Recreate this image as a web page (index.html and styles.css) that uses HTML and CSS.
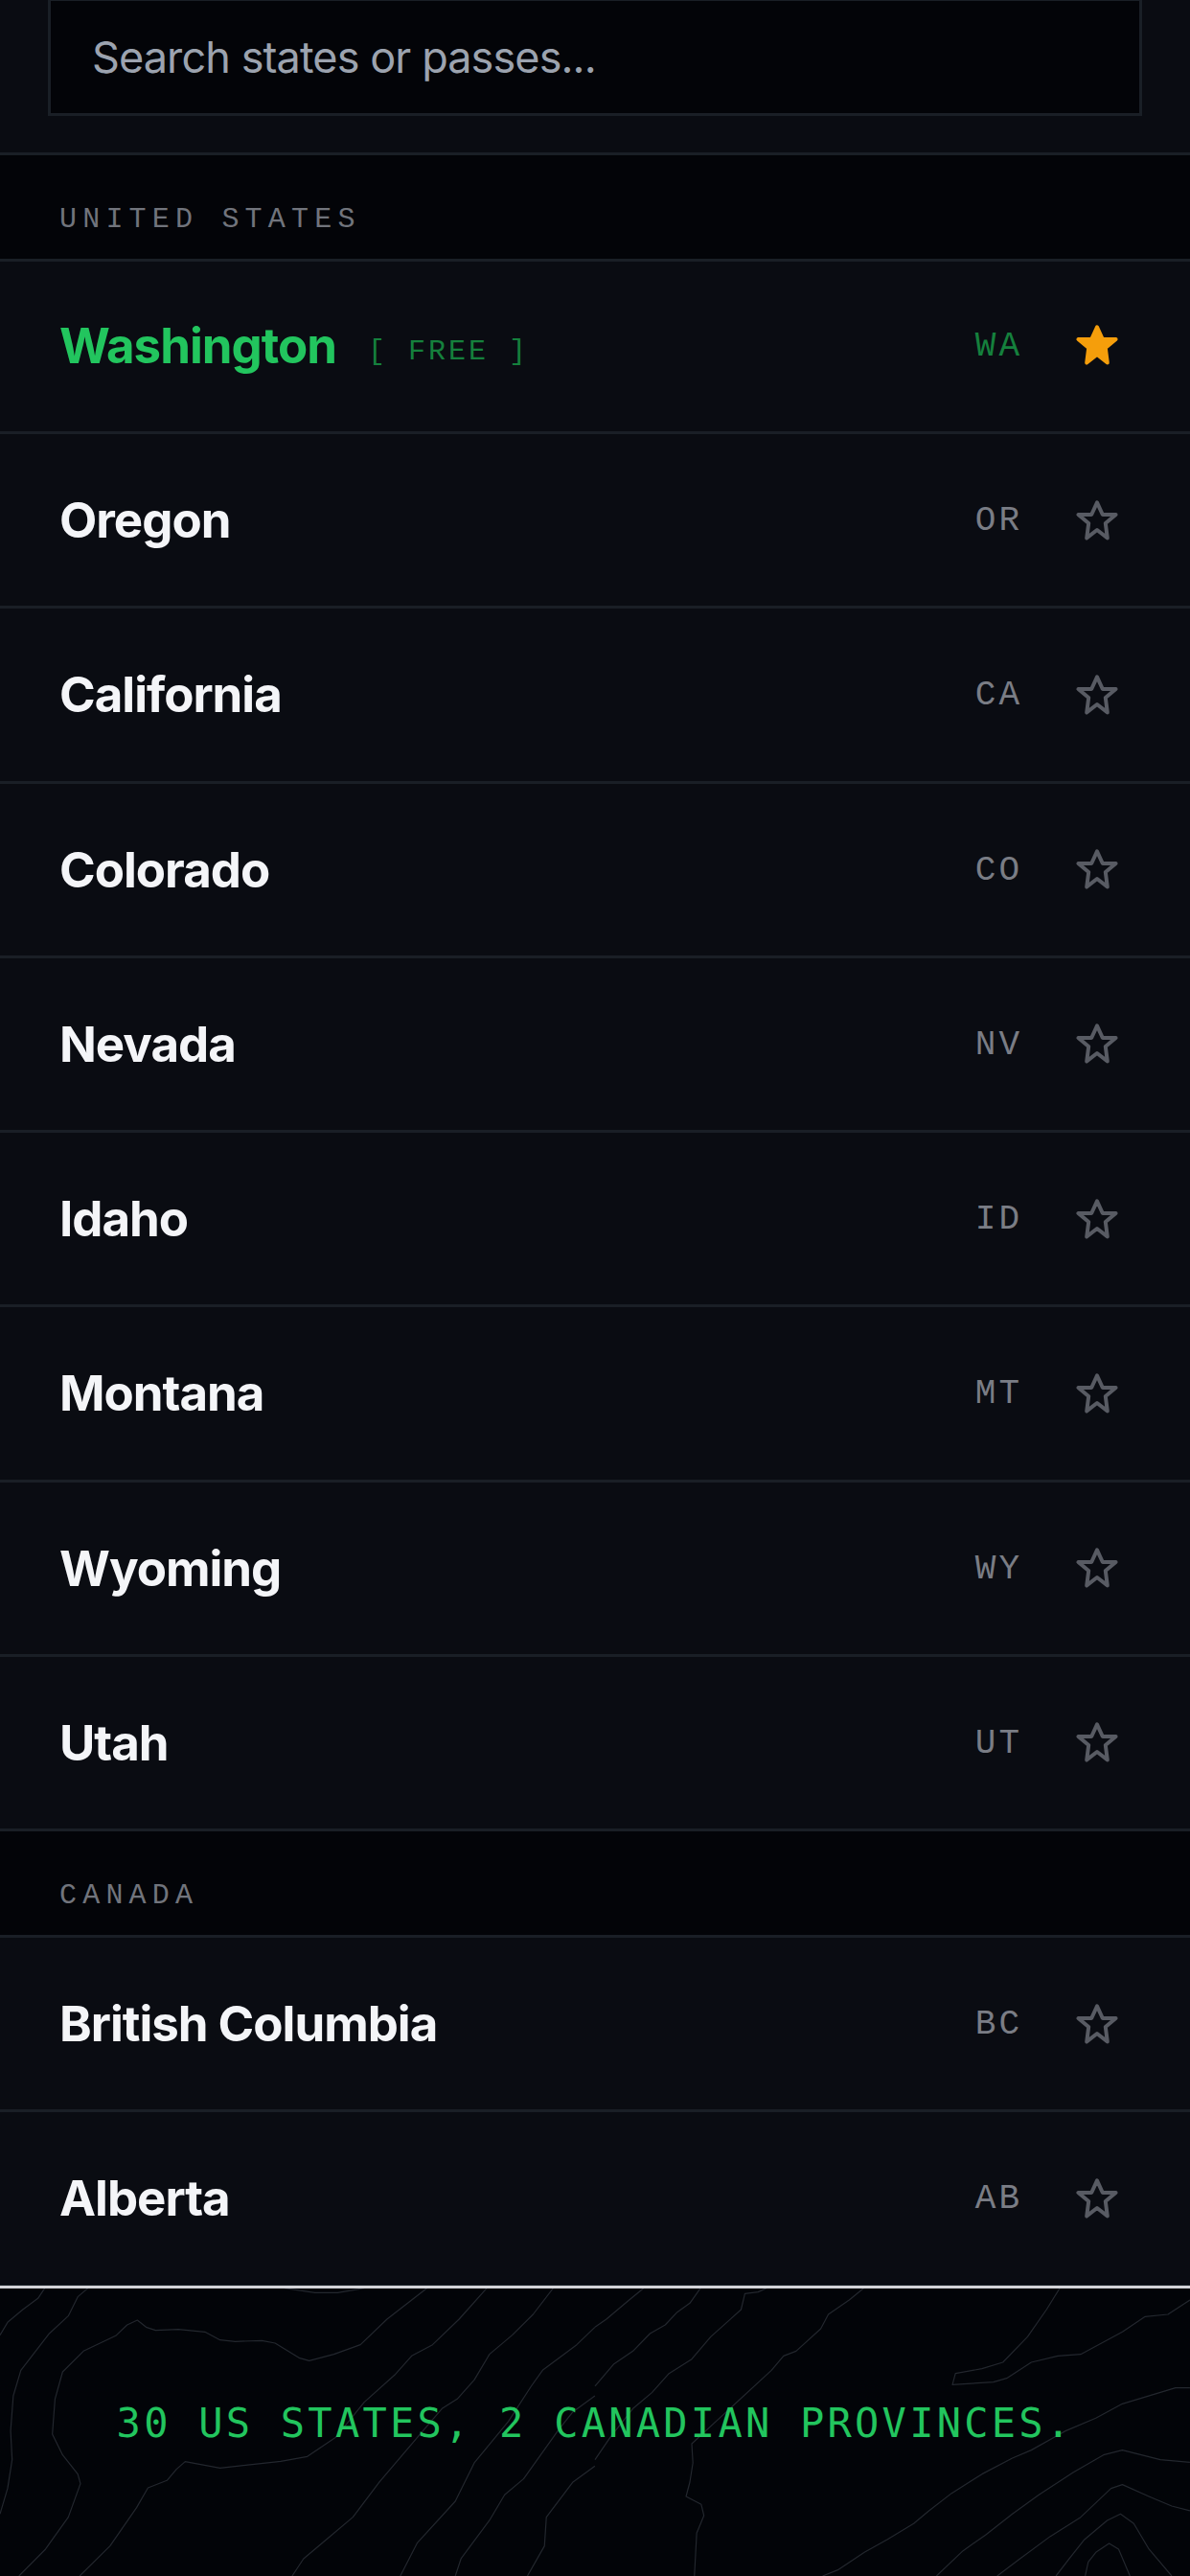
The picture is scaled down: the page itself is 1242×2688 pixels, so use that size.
FILE: index.html
```html
<!DOCTYPE html>
<html lang="en">
  <head>
    <meta charset="UTF-8" />
    <title>States</title>
    <link rel="stylesheet" href="styles.css">
  </head>
  <body>
    <svg width="0" height="0" class="defs">
      <symbol id="star" viewBox="0 0 24 24">
        <polygon points="12 2.7 14.9 9 21.8 9 16.4 13.5 17.4 21.2 12 17 6.6 21.2 7.6 13.5 2.2 9 9.1 9" />
      </symbol>
    </svg>

    <div id="search">
      <div class="search-box">Search states or passes...</div>
    </div>

    <div class="section">UNITED STATES</div>
    <ul class="states">
      <li class="state home">
        <span class="name">Washington</span>
        <span class="free">[ FREE ]</span>
        <span class="code">WA</span>
        <svg class="star on"><use href="#star" /></svg>
      </li>
      <li class="state"><span class="name">Oregon</span><span class="code">OR</span><svg class="star"><use href="#star" /></svg></li>
      <li class="state"><span class="name">California</span><span class="code">CA</span><svg class="star"><use href="#star" /></svg></li>
      <li class="state"><span class="name">Colorado</span><span class="code">CO</span><svg class="star"><use href="#star" /></svg></li>
      <li class="state"><span class="name">Nevada</span><span class="code">NV</span><svg class="star"><use href="#star" /></svg></li>
      <li class="state"><span class="name">Idaho</span><span class="code">ID</span><svg class="star"><use href="#star" /></svg></li>
      <li class="state"><span class="name">Montana</span><span class="code">MT</span><svg class="star"><use href="#star" /></svg></li>
      <li class="state"><span class="name">Wyoming</span><span class="code">WY</span><svg class="star"><use href="#star" /></svg></li>
      <li class="state"><span class="name">Utah</span><span class="code">UT</span><svg class="star"><use href="#star" /></svg></li>
    </ul>

    <div class="section">CANADA</div>
    <ul class="states">
      <li class="state"><span class="name">British Columbia</span><span class="code">BC</span><svg class="star"><use href="#star" /></svg></li>
      <li class="state"><span class="name">Alberta</span><span class="code">AB</span><svg class="star"><use href="#star" /></svg></li>
    </ul>

    <footer id="foot">
      <svg class="topo" viewBox="0 0 1242 300" preserveAspectRatio="none">
        <!-- traced in two halves, each half in its own scaled space -->
        <g transform="translate(0 -48) scale(0.396 0.3333)">
          <polyline points="118,143 100,175 60,210 20,250 0,290" />
          <polyline points="232,143 205,170 180,230 130,285 55,400 35,480 28,590 32,680 20,770 0,850" />
          <polyline points="1125,143 1020,240 950,320 880,350 815,370 790,362 725,315 690,307 620,310 580,305 540,280 470,272 410,275 385,265 362,243 335,258 305,292 220,340 165,405 145,490 138,600 165,665 205,725 212,755 180,860 120,960 50,1044" />
          <polyline points="1283,143 1210,240 1140,320 1085,355 1040,415 960,500 885,610 810,670 740,685 580,706 488,686 465,710 440,745 390,768 360,830 290,950 210,1044" />
          <polyline points="1458,143 1405,225 1350,290 1290,350 1250,430 1205,490 1165,520 1100,610 1000,750 930,860 860,930 800,990 770,1044" />
          <polyline points="1568,265 1520,320 1430,400 1400,450 1340,560 1250,690 1200,810 1100,940 1055,1044" />
          <polyline points="1568,480 1510,530 1470,590 1380,740 1330,790 1290,870 1215,990 1200,1044" />
          <polyline points="1568,700 1510,750 1440,860 1435,950 1390,1044" />
          <polyline points="750,143 830,157 890,157 960,143" />
        </g>
        <g transform="translate(621 -48) scale(0.396 0.3333)">
          <polyline points="128,143 90,180 30,240 0,265" />
          <polyline points="278,143 250,190 215,220 185,258 145,285 100,340 50,380 0,450" />
          <polyline points="452,143 430,155 395,160 385,210 305,295 255,365 195,410 150,470 100,520 40,610 0,680" />
          <polyline points="708,143 670,180 615,225 595,270 530,340 497,355 465,400 255,630 258,690 250,750 240,795 280,820 287,855 268,910 262,1044" />
          <polyline points="1225,143 1190,210 1140,295 1075,375 1020,395 950,410 942,445 1050,437 1085,425 1150,375 1220,355 1280,350 1390,280 1450,232 1510,225 1568,180" />
          <polyline points="1568,455 1530,455 1390,505 1320,550 1240,590 1150,650 1100,675 1020,725 940,785 880,840 840,880 770,930 710,970 640,1025 600,1044" />
          <polyline points="1568,688 1490,680 1390,650 1340,665 1260,720 1170,790 1100,850 1030,915 970,965 900,1044" />
          <polyline points="1568,840 1520,825 1460,795 1390,758 1360,770 1280,860 1200,920 1120,990 1060,1044" />
          <polyline points="1520,1044 1460,960 1420,880 1385,850 1350,870 1290,930 1250,990 1215,1044" />
          <polyline points="1410,1044 1380,960 1355,942 1320,970 1300,1000 1292,1044" />
        </g>
      </svg>
      <p class="count">30 US STATES, 2 CANADIAN PROVINCES.</p>
    </footer>
  </body>
</html>
```

FILE: styles.css
```css
html,
body {
  margin: 0;
  padding: 0;
  height: 2688px;
  overflow: hidden;
}
body {
  background: #0a0c12;
  font-family: 'Inter', sans-serif;
}
ul {
  margin: 0;
  padding: 0;
  list-style: none;
}
.defs {
  position: absolute;
}
#search {
  padding: 0 50px 38px;
  border-bottom: 3px solid #1a1f26;
}
.search-box {
  box-sizing: border-box;
  height: 123px;
  margin-top: -2px;
  padding: 0 43px;
  display: flex;
  align-items: center;
  border: 3px solid #1a1f26;
  background: #030408;
  color: #9ca3af;
  font-size: 45px;
  letter-spacing: -0.9px;
}
.section {
  box-sizing: border-box;
  height: 111px;
  padding: 47px 62px 0;
  border-bottom: 3px solid #1a1f26;
  background: #030408;
  color: #71747c;
  font: 30px/40px 'Liberation Mono', monospace;
  letter-spacing: 6.2px;
}
.state {
  box-sizing: border-box;
  height: 182.25px;
  padding: 0 62px;
  display: flex;
  align-items: center;
  border-bottom: 3px solid #1a1f26;
  background: #0a0c12;
}
.state.home {
  height: 180px;
  padding-bottom: 3px;
}
.name {
  color: #f4f5f8;
  font-size: 51px;
  font-weight: 700;
  letter-spacing: -1px;
}
.home .name {
  color: #22c55e;
}
.free {
  margin: 13px 0 0 33px;
  color: #15803d;
  font: 30px/36px 'Liberation Mono', monospace;
  letter-spacing: 3px;
}
.code {
  margin: 3px 0 0 auto;
  color: #7a7d85;
  font: 36px/44px 'Liberation Mono', monospace;
  letter-spacing: 3px;
}
.home .code {
  color: #15803d;
}
.star {
  width: 48px;
  height: 48px;
  margin: 0 11px 0 54px;
  fill: none;
  stroke: #585b63;
  stroke-width: 2;
  stroke-linejoin: round;
}
.star.on {
  fill: #f59e0b;
  stroke: #f59e0b;
}
#foot {
  position: relative;
  box-sizing: border-box;
  height: 303px;
  margin-top: -2px;
  border-top: 3px solid #d4d4d8;
  background: #020408;
  overflow: hidden;
}
.topo {
  position: absolute;
  left: 0;
  top: 0;
  width: 100%;
  height: 300px;
  fill: none;
  stroke: #23272e;
  stroke-width: 1.2;
  stroke-linejoin: round;
}
.topo polyline {
  vector-effect: non-scaling-stroke;
}
.count {
  position: relative;
  margin: 0;
  padding-top: 116px;
  text-align: center;
  color: #22c55e;
  font: 42px/50px 'DejaVu Sans Mono', monospace;
  letter-spacing: 3.25px;
}
```
